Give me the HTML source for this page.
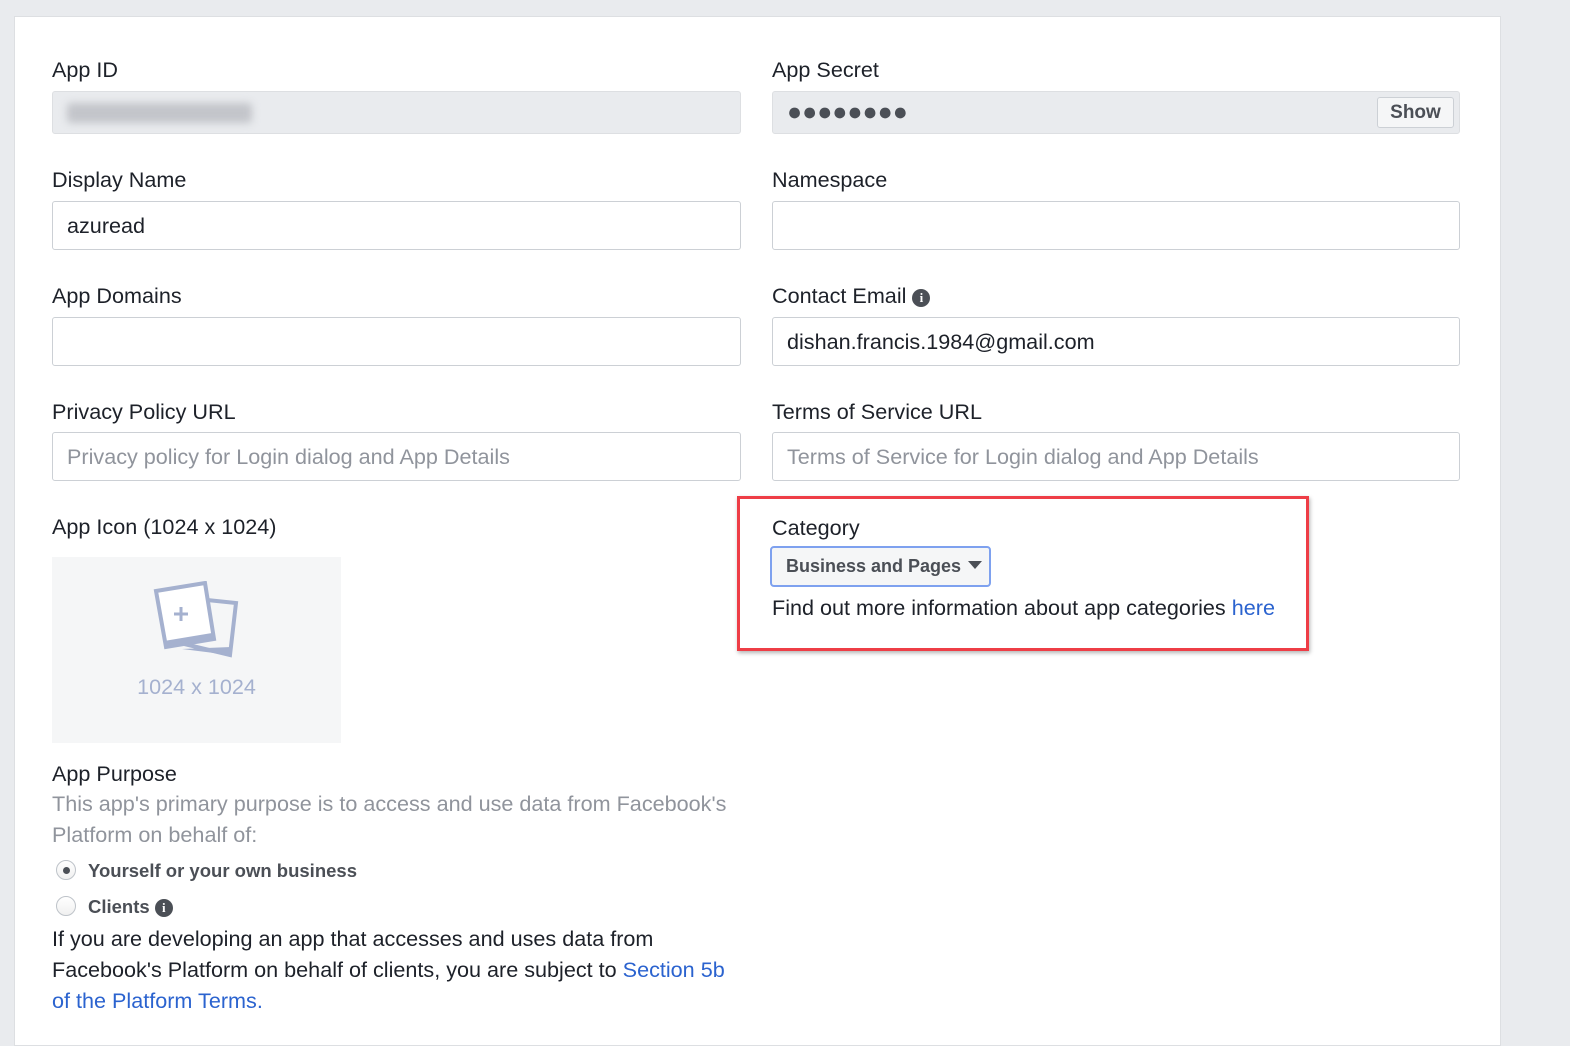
<!DOCTYPE html>
<html><head><meta charset="utf-8"><style>
*{box-sizing:border-box;margin:0;padding:0}
body{width:1570px;height:1027px;background:#e9ebee;font-family:"Liberation Sans",sans-serif;color:#1d2129;position:relative;overflow:hidden}
.panel{position:absolute;left:14px;top:16px;width:1487px;height:1030px;background:#fff;border:1px solid #dddfe2}
.l{position:absolute;font-size:21.6px;color:#1d2129;white-space:nowrap}
.in{position:absolute;height:49px;border:1px solid #ccd0d5;border-radius:3px;background:#fff;font-size:21.6px;padding:0 14px;line-height:47px;white-space:nowrap;color:#1d2129}
.ro{background:#e9ebee;border-color:#dddfe2;height:43px;line-height:41px}
.ph{color:#90949c}
.info{display:inline-block;width:18px;height:18px;border-radius:50%;background:#4b4f56;color:#fff;font-size:13px;font-weight:bold;text-align:center;line-height:18px;font-family:"Liberation Serif",serif;vertical-align:1px}
a{color:#2b63cf;text-decoration:none}
.radio{position:absolute;width:20px;height:20px;border-radius:50%;border:1px solid #bec3c9;background:linear-gradient(#fff,#f0f0f0)}
</style></head><body>
<div class="panel"></div>
<div class="l" style="left:52px;top:57px">App ID</div>
<div class="in ro" style="left:52px;top:91px;width:689px"><div style="position:absolute;left:14px;top:11px;width:185px;height:20px;background:#c3c5ca;filter:blur(4px);border-radius:4px"></div></div>
<div class="l" style="left:772px;top:57px">App Secret</div>
<div class="in ro" style="left:772px;top:91px;width:688px;font-size:25px;letter-spacing:0px;color:#4b4f56">●●●●●●●●
<div style="position:absolute;right:5px;top:5px;width:77px;height:31px;border:1px solid #ccd0d5;border-radius:3px;background:#f5f6f7;font-size:19px;font-weight:bold;color:#4b4f56;line-height:29px;text-align:center;letter-spacing:0">Show</div></div>
<div class="l" style="left:52px;top:167px">Display Name</div>
<div class="in" style="left:52px;top:201px;width:689px">azuread</div>
<div class="l" style="left:772px;top:167px">Namespace</div>
<div class="in" style="left:772px;top:201px;width:688px"></div>
<div class="l" style="left:52px;top:283px">App Domains</div>
<div class="in" style="left:52px;top:317px;width:689px"></div>
<div class="l" style="left:772px;top:283px">Contact Email <span class="info">i</span></div>
<div class="in" style="left:772px;top:317px;width:688px">dishan.francis.1984@gmail.com</div>
<div class="l" style="left:52px;top:399px">Privacy Policy URL</div>
<div class="in ph" style="left:52px;top:432px;width:689px">Privacy policy for Login dialog and App Details</div>
<div class="l" style="left:772px;top:399px">Terms of Service URL</div>
<div class="in ph" style="left:772px;top:432px;width:688px">Terms of Service for Login dialog and App Details</div>
<div class="l" style="left:52px;top:514px">App Icon (1024 x 1024)</div>
<div style="position:absolute;left:52px;top:557px;width:289px;height:186px;background:#f5f6f7">
<svg style="position:absolute;left:100px;top:24px" width="90" height="80" viewBox="0 0 90 80">
<polygon points="36,17 84,22 78,74 28,62" fill="none" stroke="#a5b1cf" stroke-width="4"/>
<polygon points="30,68 78,74 79,66" fill="#a5b1cf"/>
<polygon points="4,10 53,2 62,58 14,66" fill="#fff" stroke="#a5b1cf" stroke-width="4"/>
<polygon points="12,60 60,52 62,58 14,66" fill="#a5b1cf"/>
<path d="M29,26v14M22,33h14" stroke="#a5b1cf" stroke-width="3"/>
</svg>
<div style="position:absolute;left:0;width:100%;top:117px;text-align:center;font-size:21.6px;color:#a5b1cf">1024 x 1024</div></div>
<div class="l" style="left:52px;top:761px">App Purpose</div>
<div class="l" style="left:52px;top:788px;color:#90949c;line-height:31px">This app's primary purpose is to access and use data from Facebook's<br>Platform on behalf of:</div>
<div class="radio" style="left:56px;top:860px"><div style="position:absolute;left:6px;top:6px;width:7px;height:7px;border-radius:50%;background:#4b4f56"></div></div>
<div class="l" style="left:88px;top:860px;font-size:18.5px;font-weight:bold;color:#4b4f56">Yourself or your own business</div>
<div class="radio" style="left:56px;top:896px"></div>
<div class="l" style="left:88px;top:896px;font-size:18.5px;font-weight:bold;color:#4b4f56">Clients <span class="info">i</span></div>
<div class="l" style="left:52px;top:923px;line-height:31px">If you are developing an app that accesses and uses data from<br>Facebook's Platform on behalf of clients, you are subject to <a>Section 5b</a><br><a>of the Platform Terms.</a></div>
<div style="position:absolute;left:737px;top:496px;width:572px;height:155px;border:3px solid #ee3d46;box-shadow:1px 2px 4px rgba(0,0,0,.3)"></div>
<div class="l" style="left:772px;top:515px">Category</div>
<div style="position:absolute;left:770px;top:546px;width:221px;height:41px;border:2px solid #7ea1ef;border-radius:4px;background:#f5f6f7;font-size:18px;font-weight:bold;color:#4b4f56;line-height:37px;padding-left:14px;white-space:nowrap">Business and Pages <span style="display:inline-block;width:0;height:0;border-left:7px solid transparent;border-right:7px solid transparent;border-top:8px solid #4b4f56;vertical-align:3px;margin-left:2px"></span></div>
<div class="l" style="left:772px;top:595px">Find out more information about app categories <a>here</a></div>
</body></html>
